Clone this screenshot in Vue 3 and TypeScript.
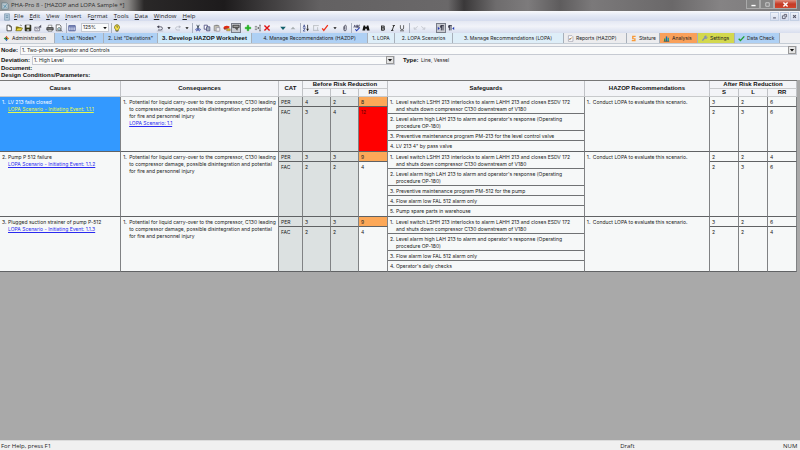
<script setup lang="ts">
import { ref } from 'vue'

interface Shape { d: string; fill?: string; stroke?: string; w?: number }
interface Tool { name: string; shapes: Shape[]; pressed?: boolean }
interface Group { id: string; sep?: boolean; tools: Tool[] }
interface Tab { label: string; tone: string; icon?: string }
interface Risk { s: string; l: string; rr: string; tone?: string }
interface Scenario {
  no: number
  cause: string
  causeLink: string
  consequenceLink?: string
  before: [Risk, Risk]
  after: [Risk, Risk]
  safeguards: string[]
}

const menus: string[] = ['File', 'Edit', 'View', 'Insert', 'Format', 'Tools', 'Data', 'Window', 'Help']

const caret: Shape[] = [{ d: 'M3 4h4l-2 2.500z', fill: '#111' }]

const leftGroups: Group[] = [
  { id: 'file', tools: [
    { name: 'New', shapes: [{ d: 'M2.500 1.500h3.500l2 2v5h-5.500z', fill: '#fff', stroke: '#333' }, { d: 'M6 1.500v2h2', stroke: '#333' }] },
    { name: 'Open', shapes: [{ d: 'M1 3h3l1 1h3v4.500H1z', fill: '#8a7a10' }, { d: 'M1 8.500l2-3.500h6.500l-2 3.500z', fill: '#e8d840', stroke: '#5a5000', w: 0.6 }, { d: 'M6 2c1-1 2-.5 2.500.5', stroke: '#333', w: 0.7 }] },
    { name: 'Save', shapes: [{ d: 'M1.500 1.500h7v7h-7z', fill: '#3a3a10', stroke: '#111' }, { d: 'M3 1.500h4v3H3z', fill: '#f4f4f4' }, { d: 'M3.500 6.500h3v2h-3z', fill: '#bbb' }] },
    { name: 'Send', shapes: [{ d: 'M1 4h6v4.500H1z', fill: '#e8e8ee', stroke: '#778' }, { d: 'M1 4l3 2.500L7 4', stroke: '#778' }, { d: 'M6 3.500L9 1v4z', fill: '#556' }] },
  ] },
  { id: 'print', tools: [
    { name: 'Print', shapes: [{ d: 'M3 1.500h4.500l-.5 3H2.500z', fill: '#fff', stroke: '#555', w: 0.7 }, { d: 'M1 4.500h8v3H1z', fill: '#777', stroke: '#222', w: 0.8 }, { d: 'M2.500 7h5v2h-5z', fill: '#ddd', stroke: '#333', w: 0.6 }] },
    { name: 'Print preview', shapes: [{ d: 'M1.500 1h4.500l1.500 1.500v6h-6z', fill: '#fff', stroke: '#333', w: 0.8 }, { d: 'M5 4.500a1.700 1.700 0 1 0 .1 0zM7 7.500L9 9.500', fill: '#bfe8f0', stroke: '#333', w: 0.8 }] },
  ] },
  { id: 'book', sep: true, tools: [
    { name: 'Worksheet', shapes: [{ d: 'M1 2h8v6.500H1z', fill: '#dfe6fa', stroke: '#3a4a8c' }, { d: 'M1 3.500h8M3.700 3v5.500M6.300 3v5.500', stroke: '#3a4a8c', w: 0.9 }] },
  ] },
]

const rightGroups: Group[] = [
  { id: 'help', sep: true, tools: [
    { name: 'Help topics', shapes: [{ d: 'M5 .8a3.300 3.300 0 0 1 1.800 5.900V8H3.200V6.700A3.300 3.300 0 0 1 5 .8z', fill: '#ffe94a', stroke: '#6a6200', w: 0.9 }, { d: 'M3.800 3.200c.3-1.200 2.400-1 2.200.2-.1.700-1 .8-1 1.800', stroke: '#444', w: 0.9 }, { d: 'M3.500 8.500h3v1h-3z', fill: '#555' }] },
  ] },
  { id: 'undo', tools: [
    { name: 'Undo', shapes: [{ d: 'M3 3.500h3a2 2 0 0 1 0 4H2.500', stroke: '#445' }, { d: 'M4 1.500L1 3.500l3 2z', fill: '#445' }, { d: 'M1 8.800h8', stroke: '#99a', w: 0.6 }] },
    { name: 'Undo list', shapes: caret },
    { name: 'Redo', shapes: [{ d: 'M7 3.500H4a2 2 0 0 0 0 4h3.500', stroke: '#b8bcc8' }, { d: 'M6 1.500l3 2-3 2z', fill: '#b8bcc8' }] },
    { name: 'Redo list', shapes: caret },
  ] },
  { id: 'edit', sep: true, tools: [
    { name: 'Cut', shapes: [{ d: 'M3.500 1l2 5M6.500 1l-2 5', stroke: '#234' }, { d: 'M3.500 6a1.200 1.200 0 1 0 .1 0zM6.500 6a1.200 1.200 0 1 0 .1 0z', stroke: '#2a3c9c' }] },
    { name: 'Copy', shapes: [{ d: 'M1.500 1.500h4v5h-4z', fill: '#fff', stroke: '#447' }, { d: 'M4.500 3.500h4v5h-4z', fill: '#cdd', stroke: '#447' }, { d: 'M5.500 5h2M5.500 6.500h2', stroke: '#447', w: 0.6 }] },
    { name: 'Paste', shapes: [{ d: 'M1.500 2h6v6.500h-6z', fill: '#c8c4b4', stroke: '#888' }, { d: 'M4 4.500h4.500V9H4z', fill: '#eee', stroke: '#99a' }, { d: 'M3 1h3v1.500H3z', fill: '#888' }] },
    { name: 'Erase', shapes: [{ d: 'M.5 5c.5-3 5-4 8-1.500L7 5.500z', fill: '#e02a10' }, { d: 'M.5 5l6 .5L4 7H1.500z', fill: '#a01808' }, { d: 'M5 6h4v2.500H4.500z', fill: '#e8c020', stroke: '#554', w: 0.5 }] },
    { name: 'Filter', pressed: true, shapes: [{ d: 'M1 1.500h8v3H1z', fill: '#666', stroke: '#222', w: 0.7 }, { d: 'M3 4.500h5L6.500 8.500z', fill: '#555' }, { d: 'M2 3h6', stroke: '#ccc', w: 0.7 }] },
  ] },
  { id: 'row', tools: [
    { name: 'Add row', shapes: [{ d: 'M4 1.500h2V4h2.500v2H6v2.500H4V6H1.500V4H4z', fill: '#1db81d', stroke: '#16a016', w: 0.5 }] },
    { name: 'Insert row', shapes: [{ d: 'M1 3h3M1 5h3M1 7h3', stroke: '#777' }, { d: 'M7.500 1.500v7M6.500 1.500h2M6.500 8.500h2', stroke: '#444', w: 0.8 }, { d: 'M4 5l2-1.500v3z', fill: '#444' }] },
    { name: 'Delete row', shapes: [{ d: 'M1.800 1.800l6.400 6.400M8.200 1.800L1.800 8.200', stroke: '#e01010', w: 1.7 }] },
  ] },
  { id: 'nav', tools: [
    { name: 'Move down', shapes: [{ d: 'M1.500 3.500h7L5 7.500z', fill: '#12606c' }] },
    { name: 'Move up', shapes: [{ d: 'M2 6.500h6L5 3.500z', fill: '#aab0b4' }] },
  ] },
  { id: 'tools', sep: true, tools: [
    { name: 'Sort', shapes: [{ d: 'M1.500 4.500l1.300-3.500 1.300 3.500M2 3.500h1.700M1.500 5.700h2.500L1.500 8.800H4', stroke: '#33438c', w: 0.9 }, { d: 'M7 1v5', stroke: '#222' }, { d: 'M5.300 6h3.400L7 9z', fill: '#222' }] },
    { name: 'Renumber', shapes: [{ d: 'M1.500 2h7M1.500 8h7M2 2v6M7 4v4', stroke: '#b4b8bc' }] },
    { name: 'Accept', shapes: [{ d: 'M1.500 5.500l2 2.500L8.500 1.500', stroke: '#f03018', w: 1.6 }] },
    { name: 'Accept list', shapes: caret },
    { name: 'Attach', shapes: [{ d: 'M3.500 3v4a1.500 1.500 0 0 0 3 0V2.500a1 1 0 0 0-2 0V7', stroke: '#445', w: 1 }] },
  ] },
  { id: 'find', sep: true, tools: [
    { name: 'Spelling', shapes: [{ d: 'M1 4.500L2.200 1.200 3.400 4.500M1.500 3.500h1.500M4.500 1.500h1.500v1.500H4.500zM4.500 3h2v1.500h-2zM8.800 1.500H7.300v3h1.500', stroke: '#224', w: 0.7 }, { d: 'M3 6.500l1.500 2L8 4.800', stroke: '#2038b0', w: 1.3 }] },
    { name: 'Find', shapes: [{ d: 'M2 2h2v1.500h2V2h2l1.500 6H6V6H4v2H.5z', fill: '#111' }] },
  ] },
  { id: 'format', tools: [
    { name: 'Bold', shapes: [{ d: 'M3.200 2v6M3.200 2.500h2.300a1.100 1.100 0 0 1 0 2.300H3.200M5.500 4.900a1.300 1.300 0 0 1 0 2.700H3.200', stroke: '#333', w: 1.4 }] },
    { name: 'Italic', shapes: [{ d: 'M4.500 2h3M2.500 8h3M6 2L4 8', stroke: '#222', w: 1.1 }] },
    { name: 'Underline', shapes: [{ d: 'M3 1.500v3.500a2 2 0 0 0 4 0V1.500M2.500 8.500h5', stroke: '#555', w: 1.1 }] },
  ] },
  { id: 'indent', sep: true, tools: [
    { name: 'Outdent', shapes: [{ d: 'M8.500 3L4 6.500M4 4v2.500h3', stroke: '#c0c4cc' }] },
    { name: 'Indent', shapes: [{ d: 'M1.500 3L6 6.500M3 6.500h3V4', stroke: '#c0c4cc' }] },
  ] },
  { id: 'marks', tools: [
    { name: 'Left to right', pressed: true, shapes: [{ d: 'M4.500 2h4M5.500 2v6M7.500 2v6', stroke: '#223', w: 1 }, { d: 'M5.500 2a1.500 1.500 0 0 0 0 3z', fill: '#223' }, { d: 'M1 3.500v4l2.500-2z', fill: '#2038b0' }] },
    { name: 'Right to left', shapes: [{ d: 'M2 2h4M3 2v6M5 2v6', stroke: '#223', w: 1 }, { d: 'M3 2a1.500 1.500 0 0 0 0 3z', fill: '#223' }, { d: 'M9 3.500v4L6.500 5.500z', fill: '#2038b0' }] },
  ] },
]

const tabs: Tab[] = [
  { label: 'Administration', tone: 'plain', icon: 'admin' },
  { label: '1. List "Nodes"', tone: 'blue' },
  { label: '2. List "Deviations"', tone: 'blue' },
  { label: '3. Develop HAZOP Worksheet', tone: 'active' },
  { label: '4. Manage Recommendations (HAZOP)', tone: 'blue' },
  { label: '1. LOPA', tone: 'pale' },
  { label: '2. LOPA Scenarios', tone: 'pale' },
  { label: '3. Manage Recommendations (LOPA)', tone: 'pale' },
  { label: 'Reports (HAZOP)', tone: 'plain', icon: 'report' },
  { label: 'Stature', tone: 'plain', icon: 'stature' },
  { label: 'Analysis', tone: 'orange', icon: 'chart' },
  { label: 'Settings', tone: 'olive', icon: 'tool' },
  { label: 'Data Check', tone: 'blue', icon: 'check' },
]
const tabIcons: Record<string, Shape[]> = {
  admin: [{ d: 'M5 1l2 3H3z', fill: '#d84020' }, { d: 'M9 5L6 7V3z', fill: '#e8a010' }, { d: 'M5 9L3 6h4z', fill: '#2060c0' }, { d: 'M1 5l3-2v4z', fill: '#209040' }, { d: 'M4 4h2v2H4z', fill: '#333' }],
  report: [{ d: 'M2 1h5l1.500 1.500V9H2z', fill: '#fff', stroke: '#889', w: 0.8 }, { d: 'M3.500 7L7 3.500', stroke: '#e09020', w: 1.4 }, { d: 'M3 5.500h3', stroke: '#3050a0', w: 0.8 }],
  stature: [{ d: 'M3 1h5v2H5v1.500h3V9H2.500V7H6V6H3z', fill: '#f79a3a' }],
  chart: [{ d: 'M1.500 5h2v4h-2z', fill: '#2a9a4a' }, { d: 'M4 2h2v7H4z', fill: '#1c6cb0' }, { d: 'M6.500 4h2v5h-2z', fill: '#17a0a0' }, { d: 'M1 9h8', stroke: '#234', w: 0.8 }],
  tool: [{ d: 'M2 8l3.500-4', stroke: '#8894a8', w: 2 }, { d: 'M5 4a2 2 0 0 1 3-2.500L6.800 3l1 1L9 3a2 2 0 0 1-3 2z', fill: '#8490b8', stroke: '#8490b8', w: 0.6 }],
  check: [{ d: 'M1 5.500l2.500 2.500L9 2', stroke: '#20a030', w: 2 }],
}

const activeTab = ref(3)
const zoom = ref('125%')
const node = ref('1. Two-phase Separator and Controls')
const deviation = ref('1. High Level')

const levelSwitch = 'Level switch LSHH 213 interlocks to alarm LAHH 213 and closes ESDV 172 and shuts down compressor C130 downstream of V180'
const levelAlarm = "Level alarm high LAH 213 to alarm and operator's response (Operating procedure OP-180)"
const consequence = 'Potential for liquid carry-over to the compressor, C130 leading to compressor damage, possible disintegration and potential for fire and personnel injury'

const scenarios: Scenario[] = [
  {
    no: 1,
    cause: 'LV 213 fails closed',
    causeLink: 'LOPA Scenario - Initiating Event: 1.1.1',
    consequenceLink: 'LOPA Scenario: 1.1',
    before: [{ s: '4', l: '2', rr: '8', tone: 'medium' }, { s: '3', l: '4', rr: '12', tone: 'high' }],
    after: [{ s: '3', l: '2', rr: '6' }, { s: '2', l: '3', rr: '6' }],
    safeguards: [levelSwitch, levelAlarm, 'Preventive maintenance program PM-213 for the level control valve', 'LV 213 4" by pass valve'],
  },
  {
    no: 2,
    cause: 'Pump P 512 failure',
    causeLink: 'LOPA Scenario - Initiating Event: 1.1.2',
    before: [{ s: '3', l: '3', rr: '9', tone: 'medium' }, { s: '2', l: '2', rr: '4' }],
    after: [{ s: '2', l: '2', rr: '4' }, { s: '2', l: '3', rr: '6' }],
    safeguards: [levelSwitch, levelAlarm, 'Preventive maintenance program PM-512 for the pump', 'Flow alarm low FAL 512 alarm only', 'Pump spare parts in warehouse'],
  },
  {
    no: 3,
    cause: 'Plugged suction strainer of pump P-512',
    causeLink: 'LOPA Scenario - Initiating Event: 1.1.3',
    before: [{ s: '3', l: '3', rr: '9', tone: 'medium' }, { s: '2', l: '2', rr: '4' }],
    after: [{ s: '3', l: '2', rr: '6' }, { s: '2', l: '2', rr: '4' }],
    safeguards: [levelSwitch, levelAlarm, 'Flow alarm low FAL 512 alarm only', "Operator's daily checks"],
  },
]
const selected = ref(1)
</script>

<template>
  <div class="window">
    <header class="title-bar">
      <svg class="app-icon" viewBox="0 0 10 10" aria-hidden="true">
        <path d="M1 1h6l2 2v6H1z" fill="#b9c7cf" stroke="#5d7480" stroke-width=".8" />
        <path d="M3 4l4 3M7 3L3 8" stroke="#4a8aa8" stroke-width="1" />
      </svg>
      <h1>PHA-Pro 8 - [HAZOP and LOPA Sample *]</h1>
      <div class="window-buttons">
        <button type="button" aria-label="Minimize"><svg viewBox="0 0 10 10"><path d="M2 6.500h6" stroke="#fff" stroke-width="2" /></svg></button>
        <button type="button" aria-label="Restore"><svg viewBox="0 0 10 10"><path d="M2.500 2.500h5v5h-5z" fill="none" stroke="#d4d4d4" stroke-width="1.200" /></svg></button>
        <button type="button" class="close" aria-label="Close"><svg viewBox="0 0 10 10"><path d="M2 2l6 6M8 2L2 8" stroke="#fff" stroke-width="2" /></svg></button>
      </div>
    </header>

    <nav class="menu-bar" aria-label="Main menu">
      <svg class="doc-icon" viewBox="0 0 10 10" aria-hidden="true">
        <path d="M2 1h6v8H2z" fill="#b8cede" stroke="#6e8ca4" stroke-width=".8" />
        <path d="M3.500 3.500h3M3.500 5.500h3" stroke="#4f7894" stroke-width=".8" />
      </svg>
      <button v-for="m in menus" :key="m" type="button"><template v-if="m === 'Format'">F<u>o</u>rmat</template><template v-else><u>{{ m[0] }}</u>{{ m.slice(1) }}</template></button>
      <div class="child-buttons">
        <button type="button" aria-label="Minimize document"><svg viewBox="0 0 10 10"><path d="M3 7h4" stroke="#556" stroke-width="1.500" /></svg></button>
        <button type="button" aria-label="Restore document"><svg viewBox="0 0 10 10"><path d="M4 2h4v4M2 4h4v4H2z" fill="none" stroke="#556" stroke-width="1.200" /></svg></button>
        <button type="button" aria-label="Close document"><svg viewBox="0 0 10 10"><path d="M3 3l4 4M7 3L3 7" stroke="#556" stroke-width="1.500" /></svg></button>
      </div>
    </nav>

    <div class="toolbar" role="toolbar" aria-label="Standard">
      <div v-for="g in leftGroups" :key="g.id" class="group" :class="[g.id, { sep: g.sep }]">
        <button v-for="t in g.tools" :key="t.name" type="button" :aria-label="t.name">
          <svg viewBox="0 0 10 10"><path v-for="(p, i) in t.shapes" :key="i" :d="p.d" :fill="p.fill ?? 'none'" :stroke="p.stroke ?? 'none'" :stroke-width="p.w ?? 1" /></svg>
        </button>
      </div>
      <div class="combo zoom">
        <select v-model="zoom" aria-label="Zoom"><option>125%</option><option>100%</option></select>
        <svg viewBox="0 0 10 10" aria-hidden="true"><path d="M2 3.500h6L5 7z" fill="#111" /></svg>
      </div>
      <div v-for="g in rightGroups" :key="g.id" class="group" :class="[g.id, { sep: g.sep }]">
        <button v-for="t in g.tools" :key="t.name" type="button" :aria-label="t.name" :class="{ pressed: t.pressed }">
          <svg viewBox="0 0 10 10"><path v-for="(p, i) in t.shapes" :key="i" :d="p.d" :fill="p.fill ?? 'none'" :stroke="p.stroke ?? 'none'" :stroke-width="p.w ?? 1" /></svg>
        </button>
      </div>
    </div>

    <nav class="tabs" aria-label="Worksheets">
      <button v-for="(t, i) in tabs" :key="t.label" type="button" :class="t.tone" :aria-current="i === activeTab" @click="activeTab = i">
        <svg v-if="t.icon" viewBox="0 0 10 10" aria-hidden="true"><path v-for="(p, k) in tabIcons[t.icon]" :key="k" :d="p.d" :fill="p.fill ?? 'none'" :stroke="p.stroke ?? 'none'" :stroke-width="p.w ?? 1" /></svg>
        {{ t.label }}
      </button>
    </nav>

    <section class="form">
      <div class="field">
        <label for="node">Node:</label>
        <div class="combo grow">
          <select id="node" v-model="node"><option>1. Two-phase Separator and Controls</option></select>
          <span class="drop" aria-hidden="true"><svg viewBox="0 0 10 10"><path d="M1.500 3.500h7L5 7.500z" fill="#111" /></svg></span>
        </div>
      </div>
      <div class="field split">
        <div class="field">
          <label for="deviation">Deviation:</label>
          <div class="combo grow">
            <select id="deviation" v-model="deviation"><option>1. High Level</option></select>
            <span class="drop" aria-hidden="true"><svg viewBox="0 0 10 10"><path d="M1.500 3.500h7L5 7.500z" fill="#111" /></svg></span>
          </div>
        </div>
        <p class="type"><b>Type:</b> Line, Vessel</p>
      </div>
      <p class="caption">Document:</p>
      <p class="caption">Design Conditions/Parameters:</p>
    </section>

    <main>
      <table>
        <colgroup>
          <col class="c-cause"><col class="c-cons"><col class="c-cat"><col class="c-num"><col class="c-num"><col class="c-rr">
          <col><col class="c-rec"><col class="c-rr"><col class="c-rr"><col class="c-rr">
        </colgroup>
        <thead>
          <tr>
            <th rowspan="2">Causes</th>
            <th rowspan="2">Consequences</th>
            <th rowspan="2">CAT</th>
            <th colspan="3">Before Risk Reduction</th>
            <th rowspan="2">Safeguards</th>
            <th rowspan="2">HAZOP Recommendations</th>
            <th colspan="3">After Risk Reduction</th>
          </tr>
          <tr>
            <th>S</th><th>L</th><th>RR</th>
            <th>S</th><th>L</th><th>RR</th>
          </tr>
        </thead>
        <tbody v-for="s in scenarios" :key="s.no">
          <tr class="first">
            <td rowspan="2" :class="{ selected: selected === s.no }" @click="selected = s.no">
              <div class="item"><span>{{ s.no }}.</span><p>{{ s.cause }}<br><a href="#">{{ s.causeLink }}</a></p></div>
            </td>
            <td rowspan="2">
              <div class="item"><span>1.</span><p>{{ consequence }}<template v-if="s.consequenceLink"><br><a href="#">{{ s.consequenceLink }}</a></template></p></div>
            </td>
            <td class="shade">PER</td>
            <td class="shade">{{ s.before[0].s }}</td>
            <td class="shade">{{ s.before[0].l }}</td>
            <td :class="s.before[0].tone">{{ s.before[0].rr }}</td>
            <td rowspan="2" class="guards">
              <div v-for="(g, i) in s.safeguards" :key="g" class="item"><span>{{ i + 1 }}.</span><p>{{ g }}</p></div>
            </td>
            <td rowspan="2"><div class="item"><span>1.</span><p>Conduct LOPA to evaluate this scenario.</p></div></td>
            <td>{{ s.after[0].s }}</td>
            <td>{{ s.after[0].l }}</td>
            <td>{{ s.after[0].rr }}</td>
          </tr>
          <tr>
            <td class="shade">FAC</td>
            <td class="shade">{{ s.before[1].s }}</td>
            <td class="shade">{{ s.before[1].l }}</td>
            <td :class="s.before[1].tone">{{ s.before[1].rr }}</td>
            <td>{{ s.after[1].s }}</td>
            <td>{{ s.after[1].l }}</td>
            <td>{{ s.after[1].rr }}</td>
          </tr>
        </tbody>
      </table>
    </main>

    <footer>
      <span>For Help, press F1</span>
      <span>Draft</span>
      <span>NUM</span>
    </footer>
  </div>
</template>

<style>
body {
  margin: 0;
}
</style>

<style scoped>
.window {
  display: flex;
  flex-direction: column;
  min-height: 100vh;
  background: #f3f4f6;
  color: #222;
  font: 5px/7px Inter, "Liberation Sans", sans-serif;
}
h1, p {
  margin: 0;
  font-size: inherit;
}
button, select {
  margin: 0;
  padding: 0;
  border: 0;
  background: none;
  color: inherit;
  font: inherit;
}
svg {
  display: block;
  flex: none;
}

.title-bar {
  display: flex;
  align-items: center;
  gap: 2px;
  height: 11px;
  padding-left: 1px;
  background: linear-gradient(90deg, #8f9496 0, #b3b3b3 2%, #b0b0b0 14%, #8c8a88 16%, #2a2828 18%, #1d1b1c 28%, #3c3a3b 33%, #636162 40%, #6a6869 56%, #3a3839 58%, #6e6c6d 62%, #7d7b7c 66%, #5e5c5d 70%, #7b797a 74%, #6a6869 84%, #858384 90%, #7a7879 100%);
}
.app-icon, .doc-icon {
  width: 8px;
  height: 8px;
}
h1 {
  flex: 1;
  color: #2c2c2c;
  font: 6px/9px "Open Sans", "Noto Sans", sans-serif;
}
.window-buttons {
  display: flex;
  align-self: flex-start;
  padding-right: 3px;
}
.window-buttons button {
  display: grid;
  place-items: center;
  width: 14px;
  height: 9px;
  border: 1px solid #aaa;
  border-top: 0;
  background: #858585;
}
.window-buttons .close {
  width: 23px;
  background: linear-gradient(#e09080, #c43a26 50%, #d0452c);
}
.window-buttons svg {
  width: 7px;
  height: 7px;
}

.menu-bar {
  display: flex;
  align-items: center;
  height: 11px;
  padding-left: 3px;
  background: linear-gradient(#f8f9fc, #e4e9f5 40%, #d5dcee 90%, #f4f4f6);
  font: 6px/9px "Open Sans", "Noto Sans", sans-serif;
}
.menu-bar > button {
  padding: 0 3px;
}
.child-buttons {
  display: flex;
  gap: 1px;
  margin-left: auto;
  padding-right: 1px;
}
.child-buttons button {
  width: 9px;
  height: 9px;
  border: 1px solid #c4d0e4;
}

.toolbar {
  display: flex;
  align-items: center;
  height: 11px;
  padding-left: 4px;
  background: linear-gradient(#e6eaf5, #f1f3f9 40%, #d8deee);
}
.group {
  display: flex;
  height: 10px;
}
.group button {
  display: grid;
  flex: 1;
  place-items: center;
}
.group svg {
  width: 8px;
  height: 8px;
}
.group .pressed {
  background: #c9cbd2;
  box-shadow: inset 0 0 0 1px #777c88;
}
.sep {
  box-shadow: -1px 0 #a9b0bf;
}
.file { width: 39px; }
.print { width: 19px; margin-left: 2px; }
.book { width: 10px; margin-left: 3px; }
.help { width: 10px; margin-left: 3px; }
.undo { width: 36px; margin-left: 33px; }
.edit { width: 48px; margin-left: 2px; }
.row { width: 29px; margin-left: 2px; }
.nav { width: 20px; margin-left: 6px; }
.tools { width: 49px; margin-left: 3px; }
.find { width: 19px; margin-left: 2px; }
.format { width: 29px; margin-left: 7px; }
.indent { width: 19px; margin-left: 3px; }
.marks { width: 20px; margin-left: 7px; }

.combo {
  display: flex;
  align-items: center;
  box-sizing: border-box;
  height: 9px;
  border: 1px solid #c6cad2;
  background: #fafbfb;
}
.combo select {
  flex: 1;
  min-width: 0;
  padding-left: 1px;
  appearance: none;
  outline: 0;
}
.zoom {
  width: 28px;
  margin-left: 4px;
}
.zoom svg {
  width: 6px;
  height: 6px;
}
.grow {
  flex: 1;
}
.drop {
  display: grid;
  place-items: center;
  box-sizing: border-box;
  width: 8px;
  height: 8px;
  border: 1px solid #999;
  background: #e4e4e4;
}
.drop svg {
  width: 6px;
  height: 6px;
}

.tabs {
  display: grid;
  grid-template-columns: 55fr 49fr 54fr 94fr 116fr 27fr 58fr 111fr 63fr 33fr 38fr 37fr 45fr;
  height: 10px;
  padding-right: 20px;
  border-bottom: 1px solid #c4ccd4;
  background: #eeeff2;
}
.tabs button {
  display: flex;
  align-items: center;
  justify-content: center;
  gap: 2px;
  min-width: 0;
  border-right: 1px solid #a8b0ba;
  white-space: nowrap;
}
.tabs svg {
  width: 7px;
  height: 7px;
}
.tabs button:has(svg) {
  justify-content: flex-start;
  padding-left: 3px;
}
.tabs .plain { background: #ececee; }
.tabs .blue { background: #aed0f4; }
.tabs .pale { background: #deeef8; }
.tabs .orange { background: #f9a05a; }
.tabs .olive { background: #d3d84e; }
.tabs .active { background: #cde9fb; }

.tabs .active, label, .caption, .type b, th {
  color: #111;
  font: bold 6px/7px "Liberation Sans", Arial, sans-serif;
}

.form {
  padding: 1px 3px 0 1px;
}
.field {
  display: flex;
  align-items: center;
  gap: 2px;
  height: 10px;
}
.field .field {
  flex: 0 0 394px;
}
.split {
  gap: 8px;
}
.type b {
  margin-right: 1px;
}
.caption:last-child {
  padding-bottom: 1px;
}

main {
  flex: 1;
  padding-right: 3px;
  background: #a9a9a9;
}
table {
  width: 100%;
  border-top: 1px solid #777;
  border-spacing: 0;
  table-layout: fixed;
  background: #f6f8f8;
}
.c-cause { width: 15.2%; }
.c-cons { width: 19.8%; }
.c-rec { width: 15.7%; }
.c-cat { width: 24px; }
.c-num { width: 28px; }
.c-rr { width: 29px; }
th {
  height: 8px;
  padding: 0;
  box-sizing: border-box;
  border-right: 1px solid #c0c2c6;
  border-bottom: 1px solid #c8cacc;
  background: #f3f4f7;
}
td {
  padding: 2px 1px 0 2px;
  border-right: 1px solid #808284;
  border-bottom: 1px solid #606264;
  vertical-align: top;
}
.first td {
  height: 7px;
}
.shade { background: #dce1e1; }
.medium { background: #fca858; }
.high { background: #ff0000; color: #600; }
.item {
  display: grid;
  grid-template-columns: 6px 1fr;
}
td.guards {
  padding: 0;
}
.guards .item {
  padding: 2px 8px 0 2px;
  border-bottom: 1px solid #707274;
}
.guards .item:last-child {
  padding-bottom: 1px;
  border-bottom: 0;
}
a {
  color: #2a2af0;
}
.selected {
  background: #3399ff;
  color: #fff;
}
.selected a {
  color: #e4f84c;
}

footer {
  display: grid;
  grid-template-columns: 620fr 163fr 16fr;
  padding: 1px 1px 0;
  background: #f0f0f0;
  border-top: 1px solid #dcdcdc;
  font: 6px/8px "Open Sans", "Noto Sans", sans-serif;
}
</style>
